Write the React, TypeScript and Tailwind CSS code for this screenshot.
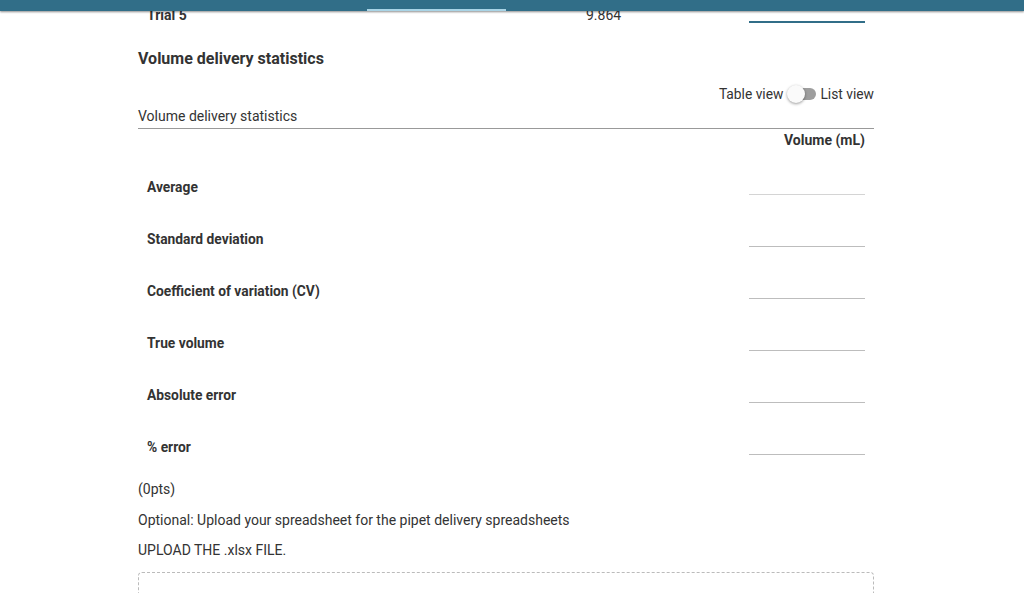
import React from "react";

const rows = [
  "Average",
  "Standard deviation",
  "Coefficient of variation (CV)",
  "True volume",
  "Absolute error",
  "% error",
];

export default function App() {
  return (
    <div
      className="relative min-h-[593px] bg-white text-[#333333]"
      style={{ fontFamily: "Roboto, 'Noto Sans', sans-serif" }}
    >
      <div className="absolute left-0 right-0 top-0 z-10 h-[11px] bg-[#316e88] shadow-[0_1px_2px_rgba(0,0,0,0.45)]">
        <div className="absolute left-[367px] top-[9px] h-[2px] w-[139px] bg-[#a9d4e6]" />
      </div>

      <div className="ml-[138px] w-[736px]">
        {/* previous table's last row, partly hidden */}
        <div className="flex h-[24px] items-start">
          <div className="w-[448px] pl-[9px] pt-[6px] text-[14px] font-bold leading-[18px]">Trial 5</div>
          <div className="w-[163px] pt-[6px] text-[14px] leading-[18px]">9.864</div>
          <div className="flex flex-1 justify-end pr-[9px] pt-[21px]">
            <div className="h-[2px] w-[116px] bg-[#316e88]" />
          </div>
        </div>

        <h2 className="mt-[25px] text-[16px] font-bold leading-[20px] text-[#333]">Volume delivery statistics</h2>

        <div className="mt-[16px] flex items-center justify-end text-[13.8px] leading-[18px] text-[#333]">
          <span>Table view</span>
          <span className="relative ml-[4px] mr-[4px] inline-block h-[18px] w-[29px]">
            <span className="absolute left-[5px] top-[3px] h-[12px] w-[24px] rounded-full bg-[#9e9e9e]" />
            <span className="absolute left-0 top-0 h-[18px] w-[18px] rounded-full bg-[#fafafa] shadow-[0_1px_3px_rgba(0,0,0,0.4)]" />
          </span>
          <span>List view</span>
        </div>

        <div className="mt-[4px] border-b border-[#999] pb-[3px] text-[14px] leading-[18px]">
          Volume delivery statistics
        </div>

        <div className="flex justify-end pr-[9px] pt-[2px] text-[14px] font-bold leading-[18px]">Volume (mL)</div>

        <div className="mt-[22px]">
          {rows.map((r, i) => (
            <div key={r} className="flex h-[52px] items-start">
              <div className="flex-1 pl-[9px] pt-[7px] text-[13.8px] font-bold leading-[18px]">{r}</div>
              <div className="pr-[9px] pt-[23px]">
                <div className={`h-px w-[116px] ${i === 0 ? "bg-[#d4d4d4]" : "bg-[#bdbdbd]"}`} />
              </div>
            </div>
          ))}
        </div>

        <div className="-mt-[4px] text-[14px] leading-[20px]">(0pts)</div>
        <div className="mt-[11px] text-[14px] leading-[20px]">
          Optional: Upload your spreadsheet for the pipet delivery spreadsheets
        </div>
        <div className="mt-[10px] text-[14px] leading-[20px]">UPLOAD THE .xlsx FILE.</div>
        <div className="mt-[12px] h-[60px] rounded-[4px] border border-dashed border-[#bbb]" />
      </div>
    </div>
  );
}
